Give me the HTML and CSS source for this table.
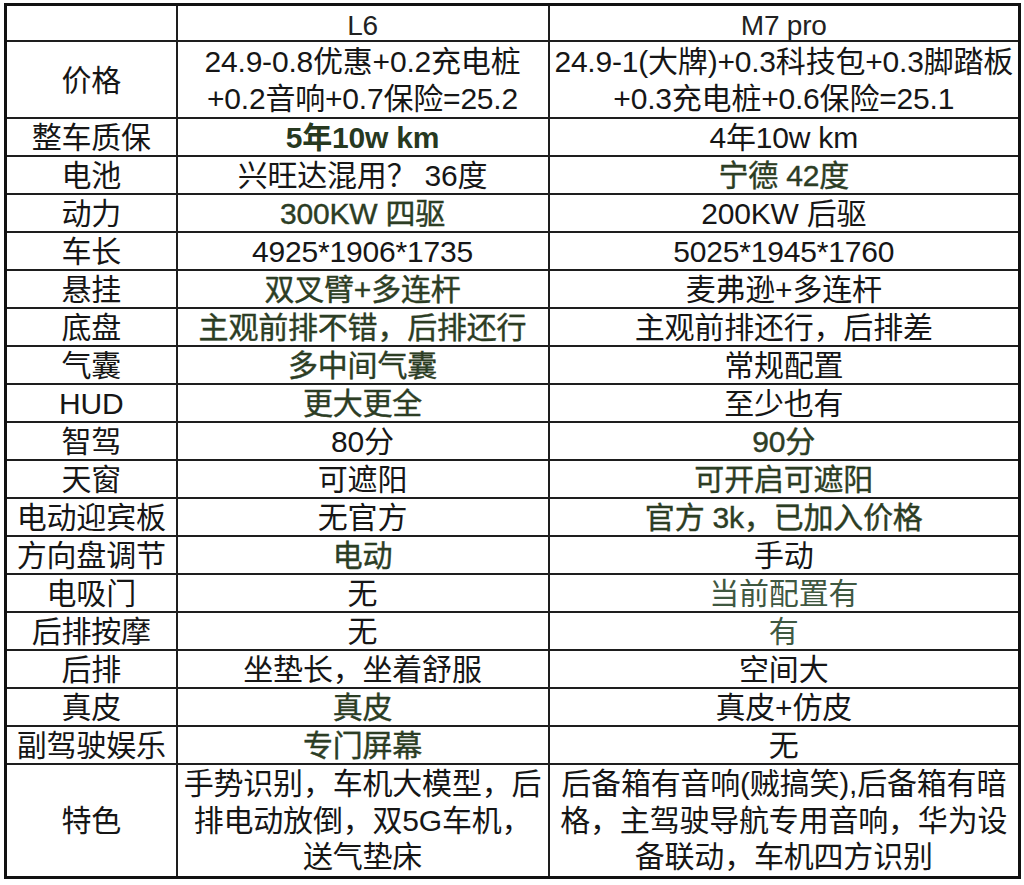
FILE: index.html
```html
<!DOCTYPE html>
<html lang="zh-CN">
<head>
<meta charset="utf-8">
<title>L6 vs M7 pro</title>
<link rel="stylesheet" href="styles.css">
</head>
<body>
<table class="cmp">
  <colgroup>
    <col class="c-label">
    <col class="c-l6">
    <col class="c-m7">
  </colgroup>
  <tr class="head"><td></td><td class="hd">L6</td><td class="hd">M7 pro</td></tr>
  <tr class="two"><td>价格</td><td>24.9-0.8优惠+0.2充电桩<br>+0.2音响+0.7保险=25.2</td><td>24.9-1(大牌)+0.3科技包+0.3脚踏板<br>+0.3充电桩+0.6保险=25.1</td></tr>
  <tr><td>整车质保</td><td class="g b">5年10w km</td><td>4年10w km</td></tr>
  <tr><td>电池</td><td>兴旺达混用？ 36度</td><td class="g">宁德 42度</td></tr>
  <tr><td>动力</td><td class="g">300KW 四驱</td><td>200KW 后驱</td></tr>
  <tr><td>车长</td><td>4925*1906*1735</td><td>5025*1945*1760</td></tr>
  <tr><td>悬挂</td><td class="g">双叉臂+多连杆</td><td>麦弗逊+多连杆</td></tr>
  <tr><td>底盘</td><td class="g">主观前排不错，后排还行</td><td>主观前排还行，后排差</td></tr>
  <tr><td>气囊</td><td class="g">多中间气囊</td><td>常规配置</td></tr>
  <tr><td>HUD</td><td class="g">更大更全</td><td>至少也有</td></tr>
  <tr><td>智驾</td><td>80分</td><td class="g">90分</td></tr>
  <tr><td>天窗</td><td>可遮阳</td><td class="g">可开启可遮阳</td></tr>
  <tr><td>电动迎宾板</td><td>无官方</td><td class="g">官方 3k，已加入价格</td></tr>
  <tr><td>方向盘调节</td><td class="g">电动</td><td>手动</td></tr>
  <tr><td>电吸门</td><td>无</td><td class="gl">当前配置有</td></tr>
  <tr><td>后排按摩</td><td>无</td><td class="gl">有</td></tr>
  <tr><td>后排</td><td>坐垫长，坐着舒服</td><td>空间大</td></tr>
  <tr><td>真皮</td><td class="g">真皮</td><td>真皮+仿皮</td></tr>
  <tr><td>副驾驶娱乐</td><td class="g">专门屏幕</td><td>无</td></tr>
  <tr class="three"><td>特色</td><td>手势识别，车机大模型，后<br>排电动放倒，双5G车机，<br>送气垫床</td><td>后备箱有音响(贼搞笑),后备箱有暗<br>格，主驾驶导航专用音响，华为设<br>备联动，车机四方识别</td></tr>
</table>
</body>
</html>
```

FILE: styles.css
```css
html, body {
  margin: 0;
  padding: 0;
  background: #ffffff;
}

body {
  padding: 3px 0 0 4px;
  font-family: "Liberation Sans", "Noto Sans CJK SC", sans-serif;
  color: #161616;
}

.cmp {
  border-collapse: collapse;
  table-layout: fixed;
  width: 1014px;
  border: 3px solid #111;
}

.c-label { width: 171px; }
.c-l6 { width: 372px; }
.c-m7 { width: 471px; }

.cmp td {
  border: 2px solid #1e1e1e;
  padding: 2px 0 0;
  height: 34px;
  line-height: 34px;
  font-size: 30px;
  text-align: center;
  vertical-align: middle;
  white-space: nowrap;
  overflow: hidden;
  letter-spacing: -0.2px;
}

.cmp .head td {
  padding-top: 5px;
  height: 29px;
  line-height: 29px;
}

.cmp .hd {
  font-size: 28px;
  color: #222;
}

.cmp .two td {
  padding-top: 1px;
  height: 74px;
  line-height: 37px;
}

.cmp .three td {
  padding-top: 1px;
  height: 110px;
  line-height: 36.7px;
}

.cmp td.g {
  color: #2c3d24;
  -webkit-text-stroke: 0.4px #2c3d24;
}

.cmp td.b {
  font-weight: bold;
  color: #27391f;
  -webkit-text-stroke: 0;
}

.cmp td.gl {
  color: #3f5841;
}
```
